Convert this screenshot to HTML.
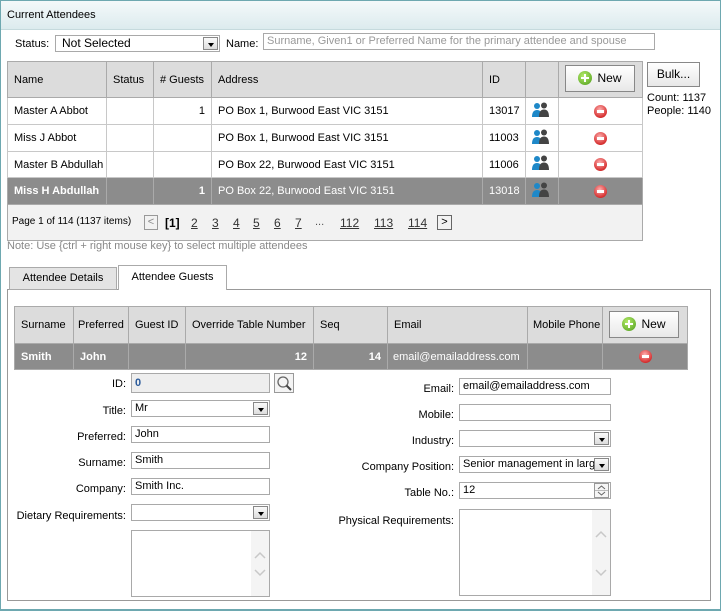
<!DOCTYPE html>
<html><head><style>
*{box-sizing:border-box;margin:0;padding:0}
body{width:721px;height:611px;background:#fff;font-family:"Liberation Sans",Arial,sans-serif;font-size:11px;color:#000;position:relative;overflow:hidden}
.a{position:absolute}
.frame{left:0;top:0;width:721px;height:611px;border:1px solid #6ea8b0;border-bottom-width:2px}
.hdr{left:1px;top:1px;width:719px;height:29px;background:linear-gradient(#f4f9fa,#dcebee);border-bottom:1px solid #c5dadd}
.inp{position:absolute;border:1px solid #a9a9a9;background:#fff;height:17px;line-height:15px;padding-left:3px;white-space:nowrap;overflow:hidden}
.dd{position:absolute;right:1px;top:1px;width:15px;height:13px;border:1px solid #888;background:linear-gradient(#fafafa,#ddd)}
.dd:after{content:"";position:absolute;left:4px;top:5px;border-left:3px solid transparent;border-right:3px solid transparent;border-top:4px solid #000}
table{border-collapse:collapse;position:absolute;table-layout:fixed}
td{border:1px solid #c8c8c8;padding:0 6px;white-space:nowrap;overflow:hidden}
tr.h td{background:#dcdcdc;border-color:#aaa}
tr.s td{background:#8c8c8c;color:#fff;font-weight:bold;border-color:#aaa}
.r{text-align:right}
.btn{position:absolute;border:1px solid #888;background:linear-gradient(#fff,#e8e8e8);text-align:center}
.plus{display:inline-block;width:14px;height:14px;border-radius:50%;background:radial-gradient(circle at 40% 35%,#b5ec6a,#4c9a1a);vertical-align:-3px;margin-right:5px;position:relative}
.plus:before{content:"";position:absolute;left:3px;top:6px;width:8px;height:2px;background:#fff}
.plus:after{content:"";position:absolute;left:6px;top:3px;width:2px;height:8px;background:#fff}
.minus{display:inline-block;width:13px;height:13px;border-radius:50%;background:radial-gradient(circle at 45% 35%,#ffb0b0,#d63030 70%,#b01818);position:relative;vertical-align:middle}
.minus:before{content:"";position:absolute;left:3px;top:5px;width:7px;height:3px;background:#fff}
.lbl{position:absolute;text-align:right;white-space:nowrap}
.pg{position:absolute;top:216px;text-decoration:underline;color:#333;font-size:12px}
.ta{position:absolute;border:1px solid #a9a9a9;background:#fff}
.ta .sb{position:absolute;right:0;top:0;bottom:0;width:18px;background:#f4f4f4}
</style></head><body>
<svg width="0" height="0" style="position:absolute"><defs>
<symbol id="ppl" viewBox="0 0 18 16"><circle cx="5" cy="4" r="3" fill="#1e88c8"/><path d="M0 15 Q0 8 5 8 Q10 8 10 15Z" fill="#1e88c8"/><circle cx="12" cy="3.5" r="3" fill="#444"/><path d="M7 15 Q7 7.5 12 7.5 Q17 7.5 17 15Z" fill="#444"/></symbol>
<symbol id="chev" viewBox="0 0 18 50"><path d="M4 20 L9 15 L14 20" fill="none" stroke="#c8c8c8" stroke-width="1.5"/><path d="M4 35 L9 40 L14 35" fill="none" stroke="#c8c8c8" stroke-width="1.5"/></symbol>
</defs></svg>
<div class="a frame"></div>
<div class="a hdr"></div>
<div class="a" style="left:7px;top:9px">Current Attendees</div>

<div class="a" style="left:15px;top:38px">Status:</div>
<div class="inp" style="left:55px;top:35px;width:165px;font-size:12px;padding-left:6px">Not Selected<div class="dd"></div></div>
<div class="a" style="left:226px;top:38px">Name:</div>
<div class="inp" style="left:263px;top:33px;width:392px;color:#999;font-size:11px">Surname, Given1 or Preferred Name for the primary attendee and spouse</div>

<table style="left:7px;top:61px;width:635px">
<colgroup><col style="width:99px"><col style="width:47px"><col style="width:58px"><col style="width:271px"><col style="width:43px"><col style="width:33px"><col style="width:84px"></colgroup>
<tr class="h" style="height:36px"><td>Name</td><td>Status</td><td># Guests</td><td>Address</td><td>ID</td><td></td><td></td></tr>
<tr style="height:27px"><td>Master A Abbot</td><td></td><td class="r">1</td><td>PO Box 1, Burwood East VIC 3151</td><td>13017</td><td><svg width="18" height="16"><use href="#ppl"/></svg></td><td style="text-align:center"><span class="minus"></span></td></tr>
<tr style="height:27px"><td>Miss J Abbot</td><td></td><td></td><td>PO Box 1, Burwood East VIC 3151</td><td>11003</td><td><svg width="18" height="16"><use href="#ppl"/></svg></td><td style="text-align:center"><span class="minus"></span></td></tr>
<tr style="height:26px"><td>Master B Abdullah</td><td></td><td></td><td>PO Box 22, Burwood East VIC 3151</td><td>11006</td><td><svg width="18" height="16"><use href="#ppl"/></svg></td><td style="text-align:center"><span class="minus"></span></td></tr>
<tr class="s" style="height:27px"><td>Miss H Abdullah</td><td></td><td class="r">1</td><td style="font-weight:normal">PO Box 22, Burwood East VIC 3151</td><td style="font-weight:normal">13018</td><td><svg width="18" height="16"><use href="#ppl"/></svg></td><td style="text-align:center"><span class="minus"></span></td></tr>
<tr style="height:36px"><td colspan="7" style="background:#f2f2f2;border-color:#aaa"></td></tr>
</table>
<div class="btn" style="left:565px;top:65px;width:70px;height:27px;line-height:25px;font-size:12px"><span class="plus"></span>New</div>
<div class="btn" style="left:647px;top:62px;width:53px;height:25px;line-height:23px;font-size:12px">Bulk...</div>
<div class="a" style="left:647px;top:92px;line-height:13px">Count: 1137<br>People: 1140</div>

<div class="a" style="left:12px;top:216px;font-size:10px">Page 1 of 114 (1137 items)</div>
<div class="a" style="left:144px;top:215px;width:14px;height:15px;border:1px solid #999;color:#888;text-align:center;line-height:12px">&lt;</div>
<div class="a" style="left:165px;top:216px;font-weight:bold;font-size:12px">[1]</div>
<div class="pg" style="left:191px">2</div><div class="pg" style="left:212px">3</div><div class="pg" style="left:233px">4</div><div class="pg" style="left:253px">5</div><div class="pg" style="left:274px">6</div><div class="pg" style="left:295px">7</div>
<div class="a" style="left:315px;top:216px;color:#555">...</div>
<div class="pg" style="left:340px">112</div><div class="pg" style="left:374px">113</div><div class="pg" style="left:408px">114</div>
<div class="a" style="left:437px;top:215px;width:15px;height:15px;border:1px solid #666;text-align:center;line-height:12px">&gt;</div>

<div class="a" style="left:7px;top:240px;color:#888">Note: Use {ctrl + right mouse key} to select multiple attendees</div>

<div class="a" style="left:7px;top:289px;width:704px;height:312px;border:1px solid #999"></div>
<div class="a" style="left:9px;top:267px;width:108px;height:23px;border:1px solid #aaa;background:#e4e4e4;text-align:center;line-height:21px">Attendee Details</div>
<div class="a" style="left:118px;top:265px;width:109px;height:25px;border:1px solid #aaa;border-bottom:none;background:#fff;text-align:center;line-height:23px">Attendee Guests</div>

<table style="left:14px;top:306px;width:673px">
<colgroup><col style="width:59px"><col style="width:55px"><col style="width:57px"><col style="width:128px"><col style="width:74px"><col style="width:140px"><col style="width:75px"><col style="width:85px"></colgroup>
<tr class="h" style="height:37px"><td>Surname</td><td style="padding:0 4px">Preferred</td><td>Guest ID</td><td>Override Table Number</td><td>Seq</td><td>Email</td><td style="padding:0 5px">Mobile Phone</td><td></td></tr>
<tr class="s" style="height:26px"><td>Smith</td><td>John</td><td></td><td class="r">12</td><td class="r">14</td><td style="padding:0 5px;font-weight:normal">email@emailaddress.com</td><td></td><td style="text-align:center"><span class="minus"></span></td></tr>
</table>
<div class="btn" style="left:609px;top:311px;width:70px;height:27px;line-height:25px;font-size:12px"><span class="plus"></span>New</div>

<div class="lbl" style="right:595px;top:378px">ID:</div>
<div class="inp" style="left:131px;top:373px;width:139px;height:20px;line-height:18px;background:#eee;color:#2a5a9a;font-weight:bold">0</div>
<div class="a" style="left:274px;top:373px;width:20px;height:20px;border:1px solid #999;background:#f4f4f4"><svg width="18" height="18"><circle cx="8" cy="8" r="5" fill="none" stroke="#666" stroke-width="1.3"/><line x1="11.5" y1="11.5" x2="16" y2="16" stroke="#444" stroke-width="2"/></svg></div>
<div class="lbl" style="right:595px;top:405px">Title:</div>
<div class="inp" style="left:131px;top:400px;width:139px">Mr<div class="dd"></div></div>
<div class="lbl" style="right:595px;top:431px">Preferred:</div>
<div class="inp" style="left:131px;top:426px;width:139px">John</div>
<div class="lbl" style="right:595px;top:457px">Surname:</div>
<div class="inp" style="left:131px;top:452px;width:139px">Smith</div>
<div class="lbl" style="right:595px;top:483px">Company:</div>
<div class="inp" style="left:131px;top:478px;width:139px">Smith Inc.</div>
<div class="lbl" style="right:595px;top:510px">Dietary Requirements:</div>
<div class="inp" style="left:131px;top:504px;width:139px"><div class="dd"></div></div>
<div class="ta" style="left:131px;top:530px;width:139px;height:67px"><div class="sb"><svg width="18" height="65" viewBox="0 0 18 65"><path d="M4 27 L9 22 L14 27" fill="none" stroke="#c8c8c8" stroke-width="1.5"/><path d="M4 39 L9 44 L14 39" fill="none" stroke="#c8c8c8" stroke-width="1.5"/></svg></div></div>

<div class="lbl" style="right:267px;top:383px">Email:</div>
<div class="inp" style="left:459px;top:378px;width:152px">email@emailaddress.com</div>
<div class="lbl" style="right:267px;top:409px">Mobile:</div>
<div class="inp" style="left:459px;top:404px;width:152px"></div>
<div class="lbl" style="right:267px;top:435px">Industry:</div>
<div class="inp" style="left:459px;top:430px;width:152px"><div class="dd"></div></div>
<div class="lbl" style="right:267px;top:461px">Company Position:</div>
<div class="inp" style="left:459px;top:456px;width:152px">Senior management in larg<div class="dd"></div></div>
<div class="lbl" style="right:267px;top:487px">Table No.:</div>
<div class="inp" style="left:459px;top:482px;width:152px">12<div class="a" style="right:1px;top:0px;width:15px;height:15px;border:1px solid #999;background:#f6f6f6"><svg width="13" height="13"><path d="M3 5 L6.5 2 L10 5" fill="none" stroke="#666"/><path d="M3 8 L6.5 11 L10 8" fill="none" stroke="#666"/><line x1="0" y1="6.5" x2="13" y2="6.5" stroke="#bbb"/></svg></div></div>
<div class="lbl" style="right:267px;top:515px">Physical Requirements:</div>
<div class="ta" style="left:459px;top:509px;width:152px;height:87px"><div class="sb"><svg width="18" height="85" viewBox="0 0 18 85"><path d="M4 27 L9 22 L14 27" fill="none" stroke="#c8c8c8" stroke-width="1.5"/><path d="M4 60 L9 65 L14 60" fill="none" stroke="#c8c8c8" stroke-width="1.5"/></svg></div></div>
</body></html>
